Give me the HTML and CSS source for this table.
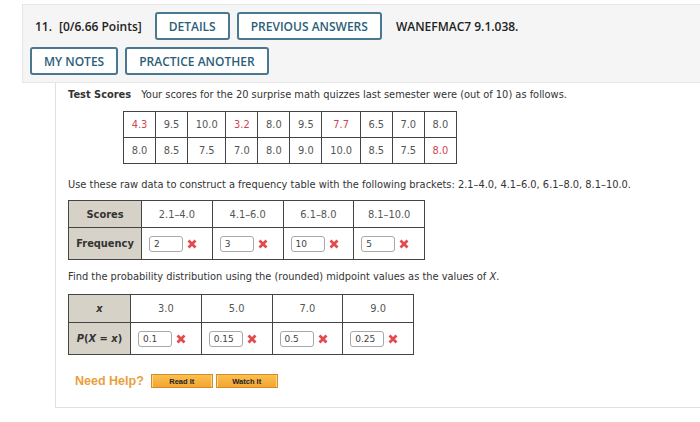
FILE: index.html
```html
<!DOCTYPE html>
<html>
<head>
<meta charset="utf-8">
<link rel="stylesheet" href="styles.css">
</head>
<body>
<div class="question">
  <div class="qhead">
    <div class="row">
      <span class="qnum">11.</span>
      <span class="pts">[0/6.66 Points]</span>
      <span class="btn">DETAILS</span>
      <span class="btn">PREVIOUS ANSWERS</span>
      <span class="code">WANEFMAC7 9.1.038.</span>
    </div>
    <div class="row">
      <span class="btn">MY NOTES</span>
      <span class="btn">PRACTICE ANOTHER</span>
    </div>
  </div>
  <div class="qbody">
    <p class="line"><b class="title">Test Scores</b>Your scores for the 20 surprise math quizzes last semester were (out of 10) as follows.</p>
    <table class="data">
      <tr><td class="red">4.3</td><td>9.5</td><td>10.0</td><td class="red">3.2</td><td>8.0</td><td>9.5</td><td class="red">7.7</td><td>6.5</td><td>7.0</td><td>8.0</td></tr>
      <tr><td>8.0</td><td>8.5</td><td>7.5</td><td>7.0</td><td>8.0</td><td>9.0</td><td>10.0</td><td>8.5</td><td>7.5</td><td class="red">8.0</td></tr>
    </table>
    <p class="line gap1">Use these raw data to construct a frequency table with the following brackets: 2.1&#8211;4.0, 4.1&#8211;6.0, 6.1&#8211;8.0, 8.1&#8211;10.0.</p>
    <table class="grid freq">
      <tr class="top"><th>Scores</th><td>2.1&#8211;4.0</td><td>4.1&#8211;6.0</td><td>6.1&#8211;8.0</td><td>8.1&#8211;10.0</td></tr>
      <tr class="bot"><th>Frequency</th>
        <td><div class="ans"><span class="inp">2</span><svg class="x" viewBox="0 0 10 10"><path d="M1.5 1.5 8.5 8.5M8.5 1.5 1.5 8.5"/></svg></div></td>
        <td><div class="ans"><span class="inp">3</span><svg class="x" viewBox="0 0 10 10"><path d="M1.5 1.5 8.5 8.5M8.5 1.5 1.5 8.5"/></svg></div></td>
        <td><div class="ans"><span class="inp">10</span><svg class="x" viewBox="0 0 10 10"><path d="M1.5 1.5 8.5 8.5M8.5 1.5 1.5 8.5"/></svg></div></td>
        <td><div class="ans"><span class="inp">5</span><svg class="x" viewBox="0 0 10 10"><path d="M1.5 1.5 8.5 8.5M8.5 1.5 1.5 8.5"/></svg></div></td>
      </tr>
    </table>
    <p class="line gap2">Find the probability distribution using the (rounded) midpoint values as the values of <i>X</i>.</p>
    <table class="grid prob">
      <tr class="top"><th><i>x</i></th><td>3.0</td><td>5.0</td><td>7.0</td><td>9.0</td></tr>
      <tr class="bot"><th><i>P</i>(<i>X</i> = <i>x</i>)</th>
        <td><div class="ans"><span class="inp">0.1</span><svg class="x" viewBox="0 0 10 10"><path d="M1.5 1.5 8.5 8.5M8.5 1.5 1.5 8.5"/></svg></div></td>
        <td><div class="ans"><span class="inp">0.15</span><svg class="x" viewBox="0 0 10 10"><path d="M1.5 1.5 8.5 8.5M8.5 1.5 1.5 8.5"/></svg></div></td>
        <td><div class="ans"><span class="inp">0.5</span><svg class="x" viewBox="0 0 10 10"><path d="M1.5 1.5 8.5 8.5M8.5 1.5 1.5 8.5"/></svg></div></td>
        <td><div class="ans"><span class="inp">0.25</span><svg class="x" viewBox="0 0 10 10"><path d="M1.5 1.5 8.5 8.5M8.5 1.5 1.5 8.5"/></svg></div></td>
      </tr>
    </table>
    <div class="help">
      <span class="need">Need Help?</span>
      <span class="hbtn">Read It</span>
      <span class="hbtn">Watch It</span>
    </div>
  </div>
</div>
</body>
</html>
```

FILE: styles.css
```css
* { box-sizing: border-box; }
body {
  margin: 0;
  background: #fff;
  font-family: "DejaVu Sans", Verdana, sans-serif;
  color: #333;
}
.question { margin: 4px 0 0 22px; }
.qhead {
  background: #f5f5f5;
  border: 1px solid #e6e6e6;
  border-right: none;
  padding: 7px 0 7px 7px;
  display: flex;
  flex-direction: column;
  gap: 7px;
  font-family: "Open Sans", sans-serif;
  font-weight: 600;
  font-size: 12px;
  color: #222;
}
.row { display: flex; align-items: center; gap: 7px; }
.qnum { margin-left: 5px; }
.pts { margin-right: 6px; }
.btn {
  height: 28px;
  padding: 0 12px;
  border: 2px solid #4a7890;
  border-radius: 3px;
  background: #fff;
  color: #2b5e78;
  display: flex;
  align-items: center;
}
.code { margin-left: 7px; }

.qbody {
  margin-left: 33px;
  border-left: 1px solid #e0e0e0;
  border-bottom: 1px solid #e0e0e0;
  padding: 5px 0 18px 12px;
  font-size: 9.85px;
}
.line { margin: 0; line-height: 14px; white-space: nowrap; }
.title { margin-right: 10px; }
.gap1 { margin-top: 14px; }
.gap2 { margin-top: 10px; }

.data {
  margin: 9px 0 0 55px;
  border-collapse: collapse;
  color: #555;
}
.data td {
  border: 1px solid #444;
  height: 26px;
  padding: 0 7.7px;
  text-align: center;
}
.data td.red { color: #d2434d; }

.grid {
  border-collapse: collapse;
  table-layout: fixed;
  color: #555;
}
.freq { margin-top: 8px; width: 357px; }
.prob { margin-top: 10px; width: 346px; }
.grid th, .grid td {
  border: 1px solid #444;
  text-align: center;
  padding: 0;
}
.grid th { background: #d6d2c8; color: #333; font-weight: bold; }
.freq th { width: 73px; }
.prob th { width: 62px; }
.freq .top th, .freq .top td { height: 27px; }
.freq .bot th, .freq .bot td { height: 32px; }
.prob .top th, .prob .top td { height: 28px; }
.prob .bot th, .prob .bot td { height: 32px; }
.ans { display: flex; align-items: center; gap: 4px; padding-left: 7px; }
.inp {
  width: 34px;
  height: 16px;
  border: 1px solid #a8a8a8;
  border-radius: 3px;
  background: #fff;
  text-align: left;
  padding-left: 4px;
  line-height: 14px;
  font-size: 9px;
  color: #444;
}
.x { width: 10px; height: 10px; }
.x path { stroke: #e24a4d; stroke-width: 2.8; fill: none; }

.help {
  margin-top: 18px;
  display: flex;
  align-items: center;
  gap: 3px;
  height: 16px;
}
.need {
  margin-left: 7px;
  margin-right: 4px;
  font-family: "Liberation Sans", Arial, sans-serif;
  font-weight: bold;
  font-size: 12.5px;
  color: #e89f3c;
}
.hbtn {
  width: 62px;
  height: 14px;
  background: linear-gradient(#fbc051, #f3a531);
  border: 1px solid #d08d2c;
  box-shadow: inset 1px 0 0 #fdd88a, inset -1px 0 0 #fdd88a;
  font-family: "Liberation Sans", Arial, sans-serif;
  font-weight: bold;
  font-size: 7.5px;
  color: #222;
  display: flex;
  align-items: center;
  justify-content: center;
}
```
